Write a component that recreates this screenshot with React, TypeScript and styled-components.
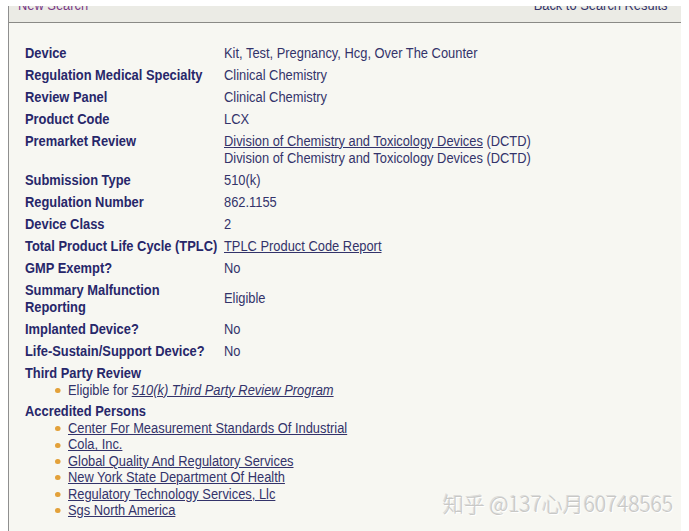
import React from "react";
import styled, { createGlobalStyle } from "styled-components";

const SX = 0.92;

const Global = createGlobalStyle`
  html, body { margin: 0; padding: 0; background: #ffffff; }
  body { width: 689px; height: 531px; overflow: hidden; font-family: "Liberation Sans", Arial, sans-serif; }
`;

const Page = styled.div`
  position: relative;
  width: 689px;
  height: 531px;
  padding-top: 6px;
  box-sizing: border-box;
  overflow: hidden;
`;

const Panel = styled.div`
  margin-left: 8px;
  width: 673px;
  height: 525px;
  background: #f7f7f2;
  border-left: 1px solid #8f8f8f;
  box-sizing: border-box;
  overflow: hidden;
`;

const Toolbar = styled.div`
  height: 16px;
  background: #ebebe5;
  border-bottom: 1px solid #8a8a86;
  display: flex;
  justify-content: space-between;
  padding: 0 13px 0 9px;
  font-size: 14px;
  line-height: 14px;
`;

const ToolLink = styled.span<{ $visited?: boolean }>`
  margin-top: -8px;
  color: ${(p) => (p.$visited ? "#7a3a86" : "#34346a")};
  transform: scaleX(${SX});
  transform-origin: ${(p) => (p.$visited ? "left" : "right")} top;
  white-space: nowrap;
`;

const Content = styled.div`
  width: ${672 / SX}px;
  transform: scaleX(${SX});
  transform-origin: left top;
`;

const Table = styled.div`
  display: grid;
  grid-template-columns: ${199 / SX}px 1fr;
  margin-top: 19px;
  padding-left: ${16 / SX}px;
  font-size: 14px;
  line-height: 17px;
`;

const Label = styled.div`
  padding: 2.5px 0;
  font-weight: bold;
  color: #27276a;
  align-self: start;
  white-space: nowrap;
`;

const Value = styled.div`
  padding: 2.5px 0;
  color: #33336a;
  align-self: center;
  white-space: nowrap;
`;

const Full = styled.div<{ $top: number }>`
  grid-column: 1 / span 2;
  padding: ${(p) => p.$top}px 0 0;
  color: #33336a;
`;

const Heading = styled.div`
  font-weight: bold;
  color: #27276a;
`;

const List = styled.ul<{ $lh: number }>`
  list-style: none;
  margin: 0;
  padding: 0 0 0 ${43 / SX}px;
  line-height: ${(p) => p.$lh}px;
`;

const Item = styled.li`
  position: relative;
  white-space: nowrap;
  &::before {
    content: "";
    position: absolute;
    left: -14px;
    top: 50%;
    width: 5.5px;
    height: 5px;
    margin-top: -2px;
    border-radius: 50%;
    background: #e3a13a;
  }
`;

const A = styled.span<{ $italic?: boolean }>`
  text-decoration: underline;
  text-underline-offset: 1px;
  font-style: ${(p) => (p.$italic ? "italic" : "normal")};
  color: #33336a;
`;

const Watermark = styled.div`
  position: absolute;
  left: 443px;
  top: 490px;
  font-family: "Noto Sans CJK SC", "Liberation Sans", sans-serif;
  font-size: 20.9px;
  font-weight: 300;
  line-height: 26px;
  color: #c8c8c6;
  text-shadow: 1px 1px 0 #ffffff, -1px -1px 0 #dcdcda;
  white-space: nowrap;
`;

type Row = { label: React.ReactNode; value: React.ReactNode };

const rows: Row[] = [
  { label: "Device", value: "Kit, Test, Pregnancy, Hcg, Over The Counter" },
  { label: "Regulation Medical Specialty", value: "Clinical Chemistry" },
  { label: "Review Panel", value: "Clinical Chemistry" },
  { label: "Product Code", value: "LCX" },
  {
    label: "Premarket Review",
    value: (
      <>
        <A>Division of Chemistry and Toxicology Devices</A> (DCTD)
        <br />
        Division of Chemistry and Toxicology Devices (DCTD)
      </>
    ),
  },
  { label: "Submission Type", value: "510(k)" },
  { label: "Regulation Number", value: "862.1155" },
  { label: "Device Class", value: "2" },
  { label: "Total Product Life Cycle (TPLC)", value: <A>TPLC Product Code Report</A> },
  { label: "GMP Exempt?", value: "No" },
  {
    label: (
      <>
        Summary Malfunction
        <br />
        Reporting
      </>
    ),
    value: "Eligible",
  },
  { label: "Implanted Device?", value: "No" },
  { label: "Life-Sustain/Support Device?", value: "No" },
];

const persons = [
  "Center For Measurement Standards Of Industrial",
  "Cola, Inc.",
  "Global Quality And Regulatory Services",
  "New York State Department Of Health",
  "Regulatory Technology Services, Llc",
  "Sgs North America",
];

export default function App() {
  return (
    <Page>
      <Global />
      <Panel>
        <Toolbar>
          <ToolLink $visited>New Search</ToolLink>
          <ToolLink>Back to Search Results</ToolLink>
        </Toolbar>
        <Content>
          <Table>
            {rows.map((r, i) => (
              <React.Fragment key={i}>
                <Label>{r.label}</Label>
                <Value>{r.value}</Value>
              </React.Fragment>
            ))}
            <Full $top={2.5}>
              <Heading>Third Party Review</Heading>
              <List $lh={17}>
                <Item>
                  Eligible for <A $italic>510(k) Third Party Review Program</A>
                </Item>
              </List>
            </Full>
            <Full $top={4.5}>
              <Heading>Accredited Persons</Heading>
              <List $lh={16.4}>
                {persons.map((p) => (
                  <Item key={p}>
                    <A>{p}</A>
                  </Item>
                ))}
              </List>
            </Full>
          </Table>
        </Content>
      </Panel>
      <Watermark>知乎 @137心月60748565</Watermark>
    </Page>
  );
}
